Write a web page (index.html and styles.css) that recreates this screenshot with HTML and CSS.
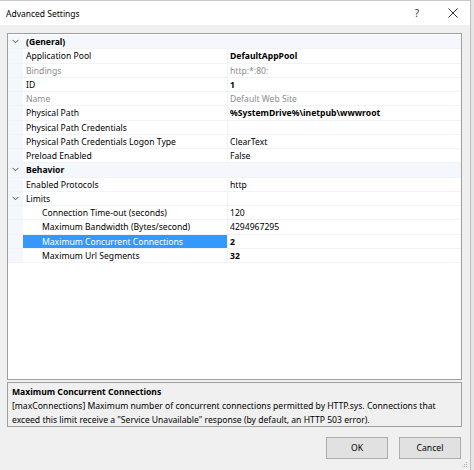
FILE: index.html
```html
<!DOCTYPE html>
<html>
<head>
<meta charset="utf-8">
<link rel="stylesheet" href="styles.css">
</head>
<body>
<div class="window">
  <div class="titlebar">
    <span class="title">Advanced Settings</span>
    <span class="help">?</span>
    <svg class="close" width="10" height="10" viewBox="0 0 10 10"><path d="M0.5 0.5 L9.5 9.5 M9.5 0.5 L0.5 9.5" stroke="#333" stroke-width="1" fill="none"/></svg>
  </div>
  <div class="content">
    <div class="grid">
      <div class="row cat"><span class="margin"><svg class="chev" width="7" height="5" viewBox="0 0 7 5"><path d="M0.5 0.8 L3.5 3.8 L6.5 0.8" stroke="#555" fill="none"/></svg></span><span class="name">(General)</span></div>
      <div class="row"><span class="margin"></span><span class="name">Application Pool</span><span class="value bold">DefaultAppPool</span></div>
      <div class="row ro"><span class="margin"></span><span class="name">Bindings</span><span class="value">http:*:80:</span></div>
      <div class="row"><span class="margin"></span><span class="name">ID</span><span class="value bold">1</span></div>
      <div class="row ro"><span class="margin"></span><span class="name">Name</span><span class="value">Default Web Site</span></div>
      <div class="row"><span class="margin"></span><span class="name">Physical Path</span><span class="value bold">%SystemDrive%\inetpub\wwwroot</span></div>
      <div class="row"><span class="margin"></span><span class="name">Physical Path Credentials</span><span class="value"></span></div>
      <div class="row"><span class="margin"></span><span class="name">Physical Path Credentials Logon Type</span><span class="value">ClearText</span></div>
      <div class="row"><span class="margin"></span><span class="name">Preload Enabled</span><span class="value">False</span></div>
      <div class="row cat"><span class="margin"><svg class="chev" width="7" height="5" viewBox="0 0 7 5"><path d="M0.5 0.8 L3.5 3.8 L6.5 0.8" stroke="#555" fill="none"/></svg></span><span class="name">Behavior</span></div>
      <div class="row"><span class="margin"></span><span class="name">Enabled Protocols</span><span class="value">http</span></div>
      <div class="row"><span class="margin"><svg class="chev" width="7" height="5" viewBox="0 0 7 5"><path d="M0.5 0.8 L3.5 3.8 L6.5 0.8" stroke="#555" fill="none"/></svg></span><span class="name">Limits</span><span class="value"></span></div>
      <div class="row"><span class="margin"></span><span class="name child">Connection Time-out (seconds)</span><span class="value">120</span></div>
      <div class="row"><span class="margin"></span><span class="name child">Maximum Bandwidth (Bytes/second)</span><span class="value">4294967295</span></div>
      <div class="row sel"><span class="margin"></span><span class="name child">Maximum Concurrent Connections</span><span class="value bold">2</span></div>
      <div class="row"><span class="margin"></span><span class="name child">Maximum Url Segments</span><span class="value bold">32</span></div>
    </div>
    <div class="desc">
      <div class="desc-title">Maximum Concurrent Connections</div>
      <div class="desc-text">[maxConnections] Maximum number of concurrent connections permitted by HTTP.sys. Connections that exceed this limit receive a "Service Unavailable" response (by default, an HTTP 503 error).</div>
    </div>
    <div class="buttons">
      <button class="btn">OK</button>
      <button class="btn">Cancel</button>
    </div>
  </div>
  <svg class="grip" width="6" height="6" viewBox="0 0 6 6"><rect x="4" y="0" width="1" height="1" fill="#aaa"/><rect x="2" y="2" width="1" height="1" fill="#aaa"/><rect x="4" y="2" width="1" height="1" fill="#aaa"/><rect x="0" y="4" width="1" height="1" fill="#aaa"/><rect x="2" y="4" width="1" height="1" fill="#aaa"/><rect x="4" y="4" width="1" height="1" fill="#aaa"/></svg>
</div>
</body>
</html>
```
FILE: styles.css
```css
html, body {
  margin: 0;
  padding: 0;
  background: #e6e6e6;
}
body {
  font-family: "Noto Sans", "Open Sans", sans-serif;
  font-size: 8.6px;
  color: #000;
  width: 474px;
  height: 470px;
  overflow: hidden;
}
.window {
  position: relative;
  width: 471px;
  height: 470px;
  background: #f0f0f0;
  border-top: 1px solid #c8c8c8;
  border-right: 1px solid #bdbdbd;
  box-sizing: border-box;
}
.titlebar {
  height: 24px;
  background: #fff;
  display: flex;
  align-items: center;
  padding-left: 6px;
}
.title {
  font-size: 8.5px;
  flex: 1;
}
.help {
  font-size: 10px;
  color: #333;
  margin-right: 29px;
}
.close {
  margin-right: 12px;
}
.content {
  padding: 8px 8px 0 7px;
}
.grid {
  height: 347px;
  border: 1px solid #a0a0a0;
  background: #fff;
  box-sizing: border-box;
  padding-top: 1px;
}
.row {
  display: flex;
  height: 14.25px;
  line-height: 14px;
  box-sizing: border-box;
  border-bottom: 1px solid #f0f3f8;
}
.margin {
  width: 15px;
  flex: none;
  background: #f4f7fc;
  display: flex;
  align-items: center;
  justify-content: center;
}
.chev {
  display: block;
}
.name {
  width: 205px;
  flex: none;
  padding-left: 3px;
  border-right: 1px solid #f0f3f8;
  box-sizing: border-box;
  white-space: nowrap;
  overflow: hidden;
}
.name.child {
  padding-left: 19px;
}
.value {
  flex: 1;
  padding-left: 2px;
  white-space: nowrap;
}
.bold {
  font-weight: bold;
}
.ro {
  color: #8d8d8d;
}
.cat {
  background: #f4f7fc;
  font-weight: bold;
}
.cat .name {
  border-right: none;
}
.sel .name {
  background: #3399ff;
  color: #fff;
}
.desc {
  margin-top: 2px;
  height: 45px;
  border: 1px solid #a0a0a0;
  box-sizing: border-box;
  padding: 2px 4px;
  background: #f0f0f0;
  line-height: 14px;
}
.desc-title {
  font-weight: bold;
}
.buttons {
  display: flex;
  justify-content: flex-end;
  gap: 11px;
  margin-top: 10px;
  padding-right: 1px;
}
.btn {
  width: 62px;
  height: 22px;
  background: #e1e1e1;
  border: 1px solid #adadad;
  font-family: "Noto Sans", "Open Sans", sans-serif;
  font-size: 8.6px;
  color: #000;
  padding: 0;
}
.grip {
  position: absolute;
  right: 2px;
  bottom: 2px;
}
```
